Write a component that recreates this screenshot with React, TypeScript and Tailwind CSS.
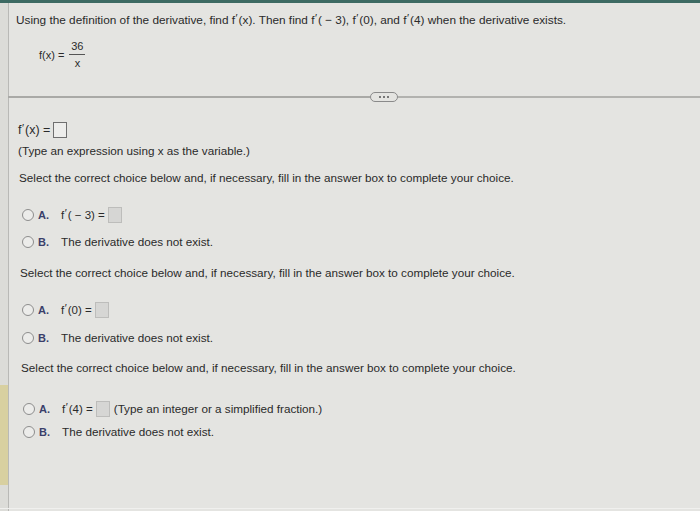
import React from "react";

const Radio = () => (
  <span className="inline-block w-[12px] h-[12px] rounded-full border-[1.5px] border-[#8d8d8d] bg-[#ececea] mr-[4px] shrink-0" />
);

const GrayBox = () => (
  <span className="inline-block w-[14px] h-[16px] border border-[#bdbdbb] bg-[#d6d6d4] align-middle ml-[3px]" />
);

const Prime = () => <span className="inline-block text-[11px] relative -top-[2px] ml-[0.5px] mr-[1px]">′</span>;

function Option({ label, children }: { label: string; children: React.ReactNode }) {
  return (
    <div className="flex items-center h-[18px]">
      <Radio />
      <span className="font-bold text-[11px] text-[#3a3f6a] w-[23px]">{label}</span>
      <span className="flex items-center">{children}</span>
    </div>
  );
}

export default function App() {
  return (
    <div
      className="relative w-[700px] h-[511px] bg-[#e4e4e1] overflow-hidden text-[#2a2a2a]"
      style={{ fontFamily: '"Liberation Sans", Arial, sans-serif' }}
    >
      <div className="h-[3px] bg-[#3d6a63]" />
      <div className="flex h-[508px]">
        <div className="w-[8px] shrink-0 bg-[#dcdcd8] flex flex-col">
          <div className="h-[382px]" />
          <div className="h-[100px] bg-[#d8d0a0]" />
        </div>
        <div className="w-[1px] shrink-0 bg-[#b9b9b6]" />
        <div className="flex-1 flex flex-col text-[11.7px] leading-[14px]">
          <div className="pl-[7px] pt-[10px] text-[11.8px]">
            Using the definition of the derivative, find f<Prime />(x). Then find f<Prime />( − 3), f<Prime />(0), and f<Prime />(4) when the derivative exists.
          </div>
          <div className="flex items-center pl-[30px] mt-[13px]">
            <span className="text-[11px]">f(x) =</span>
            <span className="flex flex-col items-center ml-[5px] text-[11px] leading-[12px]">
              <span className="px-[1px]">36</span>
              <span className="w-[16px] h-[1px] bg-[#555] my-[2px]" />
              <span>x</span>
            </span>
          </div>
          <div className="flex items-center mt-[23px] -ml-[1px]">
            <div className="w-[362px] h-[1.5px] bg-[#a9a9a6]" />
            <div className="w-[28px] h-[10px] rounded-full border-[1.5px] border-[#8a8a8a] flex items-center justify-center gap-[2px]">
              <span className="w-[2px] h-[2px] bg-[#777]" />
              <span className="w-[2px] h-[2px] bg-[#777]" />
              <span className="w-[2px] h-[2px] bg-[#777]" />
            </div>
            <div className="flex-1 h-[1.5px] bg-[#b2b2af]" />
          </div>
          <div className="flex items-center pl-[9px] mt-[19px] h-[18px]">
            <span className="text-[12.5px]">f<Prime />(x) =</span>
            <span className="inline-block w-[14px] h-[16px] border border-[#6f6f6f] bg-[#ededeb] ml-[3px]" />
          </div>
          <div className="pl-[9px] mt-[5px]">(Type an expression using x as the variable.)</div>
          <div className="pl-[10px] mt-[13px]">Select the correct choice below and, if necessary, fill in the answer box to complete your choice.</div>
          <div className="pl-[13px] mt-[21px] flex flex-col gap-[9px]">
            <Option label="A.">
              <span className="text-[11.5px]">f<Prime />( − 3) =</span>
              <GrayBox />
            </Option>
            <Option label="B.">The derivative does not exist.</Option>
          </div>
          <div className="pl-[11px] mt-[15px]">Select the correct choice below and, if necessary, fill in the answer box to complete your choice.</div>
          <div className="pl-[13px] mt-[21px] flex flex-col gap-[10px]">
            <Option label="A.">
              <span className="text-[11.5px]">f<Prime />(0) =</span>
              <GrayBox />
            </Option>
            <Option label="B.">The derivative does not exist.</Option>
          </div>
          <div className="pl-[12px] mt-[14px]">Select the correct choice below and, if necessary, fill in the answer box to complete your choice.</div>
          <div className="pl-[14px] mt-[25px] flex flex-col gap-[5px]">
            <Option label="A.">
              <span className="text-[11.5px]">f<Prime />(4) =</span>
              <GrayBox />
              <span className="ml-[4px]">(Type an integer or a simplified fraction.)</span>
            </Option>
            <Option label="B.">The derivative does not exist.</Option>
          </div>
        </div>
      </div>
      <div className="absolute left-0 right-0 bottom-[2px] h-[1px] bg-[#f0f0ee]" />
    </div>
  );
}
